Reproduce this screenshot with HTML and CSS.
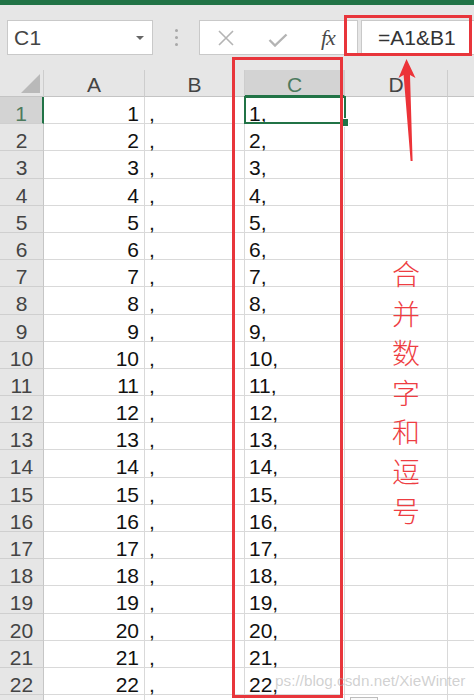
FILE: index.html
```html
<!DOCTYPE html>
<html lang="zh">
<head>
<meta charset="utf-8">
<title>Excel</title>
<link rel="stylesheet" href="styles.css">
</head>
<body>
<div class="app">
  <div class="topbar"></div>
  <div class="toolbar">
    <div class="namebox"><span class="nb-text">C1</span><span class="nb-arrow"></span></div>
    <div class="sep"><span></span><span></span><span></span></div>
    <div class="fbtns">
      <svg class="ic-x" width="18" height="18" viewBox="0 0 18 18"><path d="M2 2 L16 16 M16 2 L2 16" stroke="#b4b4b4" stroke-width="1.6" fill="none"/></svg>
      <svg class="ic-ok" width="20" height="14" viewBox="0 0 20 14"><path d="M1.5 7 L7 12.5 L18.5 1.5" stroke="#b4b4b4" stroke-width="2.4" fill="none"/></svg>
      <span class="fx">fx</span>
    </div>
    <div class="formula">=A1&amp;B1</div>
  </div>

  <div class="sheet" id="sheet">
    <div class="row head">
      <div class="c rh corner"><span class="tri"></span></div>
      <div class="c ca">A</div>
      <div class="c cb">B</div>
      <div class="c cc hsel">C</div>
      <div class="c cd">D</div>
      <div class="c ce"></div>
    </div>
  </div>

  <div class="anno box-col"></div>
  <div class="anno box-formula"></div>
  <svg class="anno arrow" width="474" height="170" viewBox="0 0 474 170">
    <polygon points="406.5,59 415.5,78 410,75 412.6,161 410.6,161 403.6,75 398.5,78" fill="#ec3338"/>
  </svg>
  <div class="anno note">合并数字和逗号</div>
  <div class="anno wm">ps://blog.csdn.net/XieWinter</div>
  <div class="anno tinybox"></div>
</div>
<script src="app.js"></script>
</body>
</html>
```

FILE: app.js
```js
(function () {
  var sheet = document.getElementById('sheet');
  var html = '';
  for (var i = 1; i <= 23; i++) {
    var sel = i === 1;
    html += '<div class="row' + (i === 23 ? ' partial' : '') + '">' +
      '<div class="c rh' + (sel ? ' rsel' : '') + '">' + (i <= 22 ? i : '') + '</div>' +
      '<div class="c ca num">' + (i <= 22 ? i : '') + '</div>' +
      '<div class="c cb txt">' + (i <= 22 ? ',' : '') + '</div>' +
      '<div class="c cc txt' + (sel ? ' sel' : '') + '">' + (i <= 22 ? i + ',' : '') + '</div>' +
      '<div class="c cd"></div>' +
      '<div class="c ce"></div>' +
      '</div>';
  }
  sheet.insertAdjacentHTML('beforeend', html);
})();
```

FILE: styles.css
```css
* { box-sizing: border-box; }
html, body { margin: 0; padding: 0; }
body {
  width: 474px;
  height: 700px;
  overflow: hidden;
  background: #fff;
  font-family: "Liberation Sans", Arial, sans-serif;
}
.app { position: relative; width: 474px; height: 700px; overflow: hidden; }

.topbar { height: 5px; background: #217346; }

.toolbar {
  height: 65px;
  background: #e6e6e6;
  display: flex;
  align-items: flex-start;
  padding: 15px 0 0 7px;
}
.namebox {
  width: 146px;
  height: 35px;
  background: #fff;
  border: 1px solid #c9c9c9;
  display: flex;
  align-items: center;
  justify-content: space-between;
  padding: 0 8px 0 6px;
}
.nb-text { font-size: 21px; color: #444; letter-spacing: 0.3px; }
.nb-arrow {
  width: 0; height: 0;
  border-left: 4px solid transparent;
  border-right: 4px solid transparent;
  border-top: 4px solid #666;
}
.sep {
  width: 46px;
  height: 35px;
  display: flex;
  flex-direction: column;
  align-items: center;
  justify-content: center;
  gap: 4px;
}
.sep span { width: 3px; height: 3px; border-radius: 50%; background: #a8a8a8; }
.fbtns {
  width: 159px;
  height: 35px;
  background: #fff;
  border: 1px solid #c9c9c9;
  display: flex;
  align-items: center;
  padding-left: 17px;
}
.ic-x { margin-top: 1px; }
.ic-ok { margin-left: 33px; margin-top: 4px; }
.fx {
  margin-left: 33px;
  font-family: "Liberation Serif", "Times New Roman", serif;
  font-style: italic;
  font-size: 22px;
  color: #4a4a4a;
  letter-spacing: -1px;
}
.formula {
  flex: 1;
  height: 35px;
  margin-left: 3px;
  background: #fff;
  border: 1px solid #c9c9c9;
  border-right: none;
  font-size: 21px;
  color: #333;
  line-height: 33px;
  padding-left: 16px;
}

.sheet { background: #fff; }
.row { display: flex; height: 27.2px; }
.row.head { height: 27px; background: #e6e6e6; }
.c {
  height: 100%;
  border-right: 1px solid #d9d9d9;
  border-bottom: 1px solid #d9d9d9;
  font-size: 21px;
  color: #111;
  white-space: nowrap;
}
.row:not(.head) .c { padding-top: 7px; line-height: 19px; }
.rh {
  width: 44px;
  background: #e6e6e6;
  color: #444;
  text-align: center;
  border-right: 1px solid #c6c6c6;
  border-bottom-color: #cfcfcf;
}
.ca { width: 101px; }
.cb { width: 100px; }
.cc { width: 100px; }
.cd { width: 103px; }
.ce { flex: 1; border-right: none; }

.head .c {
  background: #e6e6e6;
  color: #444;
  text-align: center;
  line-height: 27px;
  padding-top: 1px;
  border-bottom: 1px solid #c4c4c4;
  border-right-color: #cdcdcd;
}
.head .c.hsel { background: #d3d3d3; color: #4d7a5e; border-bottom: 2px solid #217346; }
.corner { position: relative; }
.tri {
  position: absolute;
  right: 3px;
  bottom: 3px;
  width: 0; height: 0;
  border-left: 19px solid transparent;
  border-bottom: 19px solid #b9b9b9;
}

.num { text-align: right; padding-right: 5px; }
.txt { padding-left: 4px; }
.rh.rsel { background: #d3d3d3; color: #4d7a5e; border-right: 2px solid #217346; }

.sel { position: relative; }
.sel::before {
  content: "";
  position: absolute;
  left: -1px; top: -1px; right: -2px; bottom: -1px;
  border: 2px solid #217346;
}
.sel::after {
  content: "";
  position: absolute;
  right: -5px; bottom: -4px;
  width: 7px; height: 7px;
  background: #217346;
  border: 1px solid #fff;
}

.anno { position: absolute; pointer-events: none; }
.box-col {
  left: 232px; top: 57px;
  width: 111px; height: 641px;
  border: 3px solid #e8353b;
}
.box-formula {
  left: 344px; top: 15px;
  width: 128px; height: 41px;
  border: 3px solid #e8353b;
}
.arrow { left: 0; top: 0; }
.note {
  left: 391px; top: 254px;
  width: 30px;
  font-family: "Noto Sans CJK SC", sans-serif;
  font-weight: 300;
  font-size: 28px;
  line-height: 39.5px;
  color: #ee3d42;
  text-align: center;
  word-break: break-all;
}
.wm {
  left: 275px; top: 672px;
  font-size: 15.3px;
  color: rgba(170, 170, 170, 0.55);
  white-space: nowrap;
}
.tinybox {
  left: 350px; top: 697px;
  width: 28px; height: 10px;
  border: 1px solid #bdbdbd;
  background: #fafafa;
}
```
